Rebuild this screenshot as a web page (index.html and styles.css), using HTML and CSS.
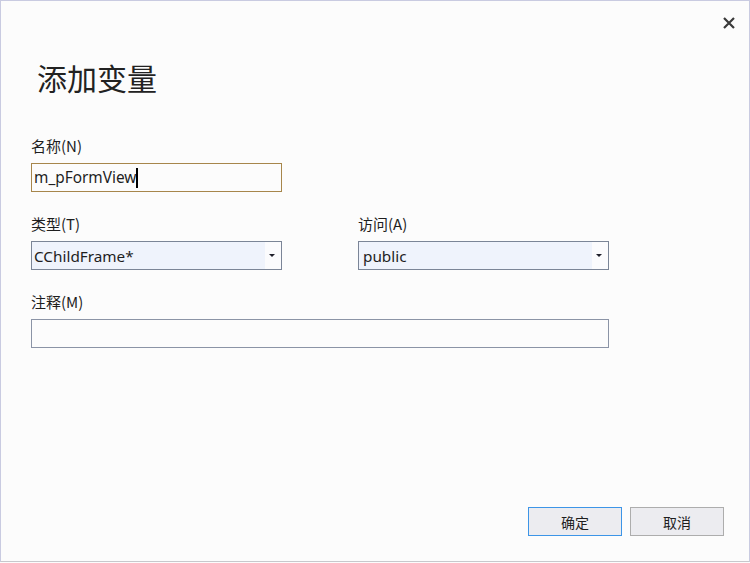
FILE: index.html
```html
<!DOCTYPE html>
<html lang="zh-CN">
<head>
  <meta charset="UTF-8" />
  <title>添加变量</title>
  <link rel="stylesheet" href="styles.css">
</head>
<body>
  <div class="dialog">
    <div class="titlebar">
      <button class="close" title="关闭">
        <svg width="12" height="12" viewBox="0 0 12 12"><path d="M1 1 L11 11 M11 1 L1 11" stroke="#3a3a3a" stroke-width="2.2"/></svg>
      </button>
    </div>
    <h1 class="heading">添加变量</h1>

    <div class="form">
      <div class="field">
        <label>名称(N)</label>
        <div class="textbox focused"><span>m_pFormView</span><span class="caret"></span></div>
      </div>
      <div class="field"></div>

      <div class="field">
        <label>类型(T)</label>
        <div class="combo">
          <span class="combo-value">CChildFrame*</span>
          <span class="combo-arrow"></span>
        </div>
      </div>
      <div class="field">
        <label>访问(A)</label>
        <div class="combo">
          <span class="combo-value access">public</span>
          <span class="combo-arrow"></span>
        </div>
      </div>

      <div class="field wide">
        <label>注释(M)</label>
        <div class="textbox"></div>
      </div>
    </div>

    <div class="actions">
      <button class="btn default">确定</button>
      <button class="btn">取消</button>
    </div>
  </div>
</body>
</html>
```

FILE: styles.css
```css
html, body {
  margin: 0;
  padding: 0;
}
body {
  font-family: "Noto Sans", "Noto Sans CJK SC", sans-serif;
  color: #1e1e1e;
  background: #fcfcfc;
}
.dialog {
  box-sizing: border-box;
  width: 750px;
  height: 562px;
  border: 1px solid #c9cbe1;
  border-bottom-color: #c8c8cc;
  background: #fcfcfc;
  display: flex;
  flex-direction: column;
  padding: 0 0 0 30px;
}
.titlebar {
  display: flex;
  justify-content: flex-end;
  height: 44px;
  padding-right: 13px;
}
.close {
  margin-top: 15px;
  width: 14px;
  height: 14px;
  padding: 0;
  border: none;
  background: transparent;
  display: flex;
  align-items: center;
  justify-content: center;
}
.heading {
  margin: 12px 0 0 6px;
  font-family: "Noto Sans CJK SC", sans-serif;
  font-weight: 400;
  font-size: 30px;
  line-height: 40px;
  color: #222;
}
.form {
  margin-top: 39px;
  display: grid;
  grid-template-columns: 251px 251px;
  column-gap: 76px;
  row-gap: 22px;
  width: 578px;
}
.field.wide {
  grid-column: 1 / 3;
}
.field label {
  display: block;
  font-family: "Noto Sans CJK SC", sans-serif;
  font-size: 15px;
  line-height: 20px;
  margin-bottom: 7px;
  color: #1e1e1e;
}
.textbox {
  box-sizing: border-box;
  height: 29px;
  border: 1px solid #8b94a6;
  background: #fcfcfc;
  display: flex;
  align-items: center;
  padding-left: 2px;
  font-size: 15.4px;
}
.textbox.focused {
  border-color: #a7864b;
}
.caret {
  display: inline-block;
  width: 2px;
  height: 20px;
  background: #000;
}
.combo {
  box-sizing: border-box;
  height: 29px;
  border: 1px solid #7b8597;
  background: #eff3fc;
  display: flex;
  align-items: stretch;
  font-size: 15.3px;
}
.combo-value {
  flex: 1;
  display: flex;
  align-items: center;
  padding-left: 2px;
}
.combo-value.access {
  padding-left: 4px;
}
.combo-arrow {
  width: 16px;
  background: #fbfbfd;
  position: relative;
}
.combo-arrow::after {
  content: "";
  position: absolute;
  left: 4px;
  top: 12px;
  border-left: 3.5px solid transparent;
  border-right: 3.5px solid transparent;
  border-top: 3.5px solid #1e1e2a;
}
.actions {
  margin-top: auto;
  margin-bottom: 25px;
  display: flex;
  justify-content: flex-end;
  gap: 8px;
  padding-right: 25px;
}
.btn {
  box-sizing: border-box;
  width: 94px;
  height: 29px;
  border: 1px solid #adadad;
  background: #ececf0;
  font-family: "Noto Sans CJK SC", sans-serif;
  font-size: 14px;
  color: #1e1e1e;
  padding: 0;
}
.btn.default {
  border-color: #3d95e7;
}
```
